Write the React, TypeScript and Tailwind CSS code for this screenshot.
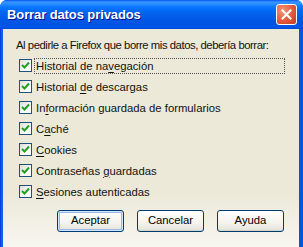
import React from 'react';

type Item = { before: string; key: string; after: string; checked: boolean };

const items: Item[] = [
  { before: 'Historial de na', key: 'v', after: 'egación', checked: true },
  { before: 'Historial ', key: 'd', after: 'e descargas', checked: true },
  { before: 'In', key: 'f', after: 'ormación guardada de formularios', checked: true },
  { before: 'C', key: 'a', after: 'ché', checked: true },
  { before: '', key: 'C', after: 'ookies', checked: true },
  { before: 'Contraseñas ', key: 'g', after: 'uardadas', checked: true },
  { before: '', key: 'S', after: 'esiones autenticadas', checked: true },
];

const CheckBox = ({ checked }: { checked: boolean }) => (
  <div className="w-[13px] h-[13px] border border-[#1c5180] bg-[linear-gradient(135deg,#dcdcd7,#ffffff_70%)] flex items-center justify-center shrink-0">
    {checked && (
      <svg width="9" height="9" viewBox="0 0 9 9">
        <path d="M1 4 L3.5 6.5 L8 1.5" stroke="#21a121" strokeWidth="2" fill="none" />
      </svg>
    )}
  </div>
);

const XpButton = ({ label, isDefault }: { label: string; isDefault?: boolean }) => (
  <button
    className={`w-[67px] h-[22px] rounded-[3px] border border-[#003c74] bg-[linear-gradient(to_bottom,#ffffff,#f4f3ee_60%,#e3e1d6)] text-[11.3px] text-black leading-none ${
      isDefault ? 'shadow-[inset_0_0_0_1px_#cee7ff,inset_0_0_0_2px_#98b8ea]' : 'shadow-[inset_0_-1px_0_#d6d0c5]'
    }`}
  >
    {label}
  </button>
);

export default function App() {
  return (
    <div className="w-[303px] h-[247px] flex flex-col rounded-t-[7px] overflow-hidden bg-[linear-gradient(to_right,#0831d9,#166aee_2px,#0055e5_4px)] font-['Liberation_Sans',Arial,sans-serif]">
      {/* Title bar */}
      <div className="h-[29px] shrink-0 flex items-center justify-between pl-[7px] pr-[6px] bg-[linear-gradient(to_bottom,#0058ee,#3a93ff_2px,#288eff_4px,#127dff_6px,#036ffc_9px,#0262ee_14px,#0057e5_20px,#0054e3_24px,#0055eb_27px,#0048d4)]">
        <span className="text-white font-bold text-[13px] tracking-[-0.1px] [text-shadow:1px_1px_0_#0f1089]">
          Borrar datos privados
        </span>
        <div className="w-[21px] h-[21px] rounded-[3px] border border-white bg-[radial-gradient(circle_at_30%_30%,#f19778,#e15a3a_55%,#c23a1f)] flex items-center justify-center">
          <svg width="11" height="11" viewBox="0 0 11 11">
            <path d="M1.5 1.5 L9.5 9.5 M9.5 1.5 L1.5 9.5" stroke="white" strokeWidth="2" strokeLinecap="square" />
          </svg>
        </div>
      </div>

      {/* Body */}
      <div className="flex-1 ml-[3px] mr-[4px] bg-[linear-gradient(to_bottom,#ece9d8_75%,#f7f6f0)] flex flex-col pl-[13px] pr-[15px] text-[11.3px] text-[#111]">
        <div className="mt-[10px] h-[13px] leading-[13px] whitespace-nowrap tracking-[-0.45px]">
          Al pedirle a Firefox que borre mis datos, debería borrar:
        </div>
        <div className="mt-[3px] flex flex-col">
          {items.map((it, i) => (
            <div key={i} className="h-[21px] flex items-center pl-[3px]">
              <CheckBox checked={it.checked} />
              <div
                className={`ml-[3px] h-[14px] leading-[14px] px-[1px] whitespace-nowrap ${
                  i === 0 ? 'flex-1 outline-1 outline-dotted outline-[#555]' : ''
                }`}
              >
                {it.before}
                <span className="underline underline-offset-[2px]">{it.key}</span>
                {it.after}
              </div>
            </div>
          ))}
        </div>
        <div className="mt-[8px] flex justify-end gap-[13px]">
          <XpButton label="Aceptar" isDefault />
          <XpButton label="Cancelar" />
          <XpButton label="Ayuda" />
        </div>
      </div>
    </div>
  );
}
